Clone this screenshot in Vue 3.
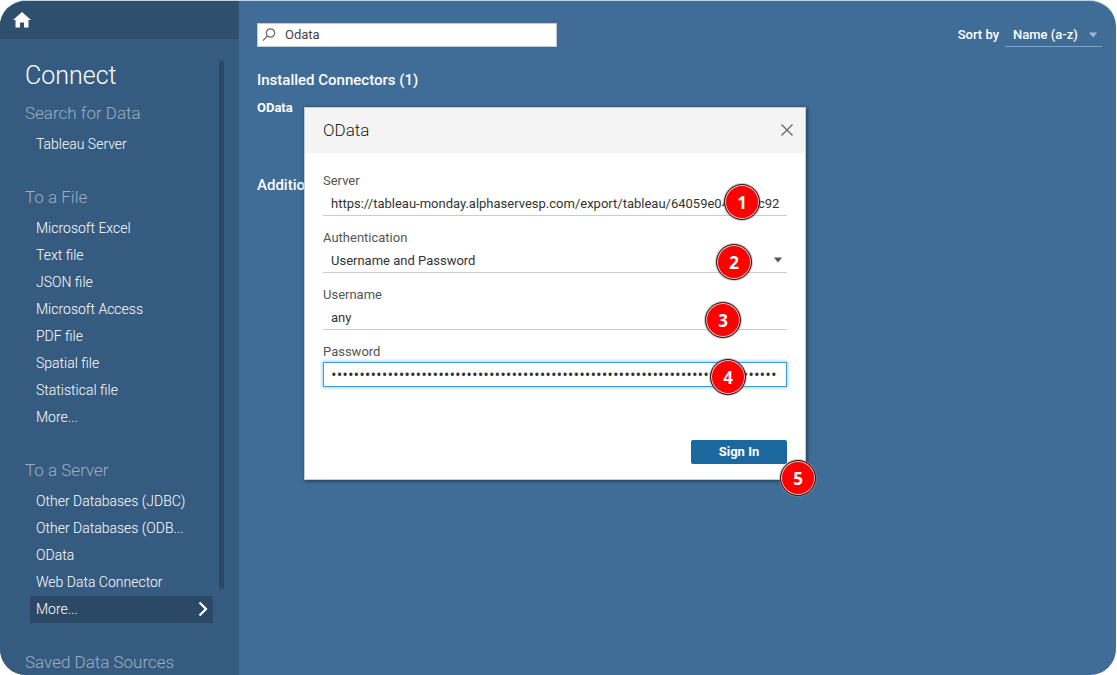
<template>
  <div class="connect-page">
    <!-- Panel lateral -->
    <aside class="sidebar">
      <header class="sidebar-top">
        <a href="#" class="home-link" aria-label="Home">
          <svg width="18" height="16" viewBox="0 0 18 16" fill="#fff">
            <path d="M9 0 L18 8 H15.5 V15.5 H11 V10.5 H7 V15.5 H2.5 V8 H0 Z" />
          </svg>
        </a>
      </header>
      <div class="sidebar-body">
        <nav class="sources">
          <h1>Connect</h1>
          <section v-for="group in groups" :key="group.title" class="source-group">
            <h2>{{ group.title }}</h2>
            <a
              v-for="item in group.items"
              :key="item"
              href="#"
              :class="['source-item', { active: group.title === 'To a Server' && item === 'More...' }]"
            >
              <span>{{ item }}</span>
              <svg
                v-if="group.title === 'To a Server' && item === 'More...'"
                width="10" height="16" viewBox="0 0 10 16" fill="none" stroke="#fff" stroke-width="2.2"
              >
                <path d="M1.5 1.5 L8 8 L1.5 14.5" />
              </svg>
            </a>
          </section>
        </nav>
        <div class="scroll-thumb"></div>
      </div>
    </aside>

    <!-- Conectores -->
    <main class="content">
      <div class="toolbar">
        <div class="search-box">
          <svg width="14" height="14" viewBox="0 0 14 14" fill="none" stroke="#666" stroke-width="1.2">
            <circle cx="8.5" cy="5" r="4.2" />
            <path d="M5.4 8 L1 12.6" />
          </svg>
          <input v-model="search" type="text" aria-label="Search connectors" />
        </div>
        <div class="sort-box">
          <label for="sort">Sort by</label>
          <div class="select-wrap sort-select">
            <select id="sort" v-model="sort">
              <option value="az">Name (a-z)</option>
              <option value="za">Name (z-a)</option>
            </select>
            <svg width="8" height="6" viewBox="0 0 8 6" fill="#a3b9cd"><path d="M0 0.5 H8 L4 5.5 Z" /></svg>
          </div>
        </div>
      </div>
      <h3>Installed Connectors (1)</h3>
      <a href="#" class="connector">OData</a>
      <h3>Additio</h3>
    </main>

    <!-- Dialogo OData -->
    <div class="overlay">
      <form class="dialog" role="dialog" aria-labelledby="dialog-title" @submit.prevent>
        <div class="dialog-head">
          <h2 id="dialog-title">OData</h2>
          <button type="button" class="close-btn" aria-label="Close">
            <svg width="12" height="12" viewBox="0 0 12 12" stroke="#666" stroke-width="1.3">
              <path d="M0.5 0.5 L11.5 11.5 M11.5 0.5 L0.5 11.5" />
            </svg>
          </button>
        </div>
        <div class="dialog-body">
          <div class="field">
            <label for="server">Server</label>
            <input id="server" v-model="server" type="text" />
            <span class="step step-1">1</span>
          </div>
          <div class="field">
            <label for="auth">Authentication</label>
            <div class="select-wrap">
              <select id="auth" v-model="auth">
                <option value="basic">Username and Password</option>
                <option value="none">No Authentication</option>
              </select>
              <svg width="8" height="6" viewBox="0 0 8 6" fill="#555"><path d="M0 0.5 H8 L4 5.5 Z" /></svg>
            </div>
            <span class="step step-2">2</span>
          </div>
          <div class="field">
            <label for="username">Username</label>
            <input id="username" v-model="username" type="text" />
            <span class="step step-3">3</span>
          </div>
          <div class="field">
            <label for="password">Password</label>
            <input id="password" v-model="password" type="password" class="focused" />
            <span class="step step-4">4</span>
          </div>
          <div class="actions">
            <button type="submit" class="sign-in">Sign In</button>
            <span class="step step-5">5</span>
          </div>
        </div>
      </form>
    </div>
  </div>
</template>

<script setup>
import { ref } from 'vue';

const search = ref('Odata');
const sort = ref('az');
const server = ref('https://tableau-monday.alphaservesp.com/export/tableau/64059e04b48ac92');
const auth = ref('basic');
const username = ref('any');
const password = ref('x'.repeat(79));

const groups = [
  { title: 'Search for Data', items: ['Tableau Server'] },
  {
    title: 'To a File',
    items: [
      'Microsoft Excel', 'Text file', 'JSON file', 'Microsoft Access',
      'PDF file', 'Spatial file', 'Statistical file', 'More...'
    ]
  },
  {
    title: 'To a Server',
    items: ['Other Databases (JDBC)', 'Other Databases (ODB...', 'OData', 'Web Data Connector', 'More...']
  },
  { title: 'Saved Data Sources', items: [] }
];
</script>

<style>
body { background: #fff; }
</style>

<style scoped>
* { box-sizing: border-box; }
.connect-page {
  position: relative; display: flex; height: 100vh; overflow: hidden;
  margin-right: 1px; border-top: 1px solid #c3d2dd; border-radius: 26px;
  background: #3f6d97; color: #fff;
  font-family: Roboto, "Liberation Sans", sans-serif; font-size: 13px;
}
h1, h2, h3 { margin: 0; font-weight: 400; }
a { color: inherit; text-decoration: none; }
input, select, button { font: inherit; color: inherit; border: 0; border-radius: 0; margin: 0; outline: none; }
svg { display: block; flex: none; }

.sidebar { width: 239px; flex: none; display: flex; flex-direction: column; background: #365b80; }
.sidebar-top { height: 38px; flex: none; display: flex; align-items: center; padding-left: 13px; background: #2f4f6e; }
.sidebar-body { flex: 1; min-height: 0; display: flex; padding: 21px 15px 0 25px; }
.sources { flex: 1; min-width: 0; }
.sources h1 { font-size: 25px; line-height: 32px; margin-bottom: 4px; font-weight: 300; }
.source-group { margin-bottom: 22px; }
.source-group h2 { font-size: 17px; line-height: 35px; font-weight: 300; color: #9aaec1; }
.source-item {
  display: flex; align-items: center; justify-content: space-between;
  height: 27px; margin: 0 6px 0 5px; padding: 0 5px 2px 6px;
  font-size: 14px; font-weight: 300; color: #fff; white-space: nowrap;
}
.source-item.active { background: #2b4964; }
.scroll-thumb { width: 5px; height: 86%; border-radius: 3px; background: #2b4863; }

.content { flex: 1; min-width: 0; padding: 22px 14px 0 18px; }
.toolbar { display: flex; justify-content: space-between; align-items: center; height: 24px; margin-bottom: 20px; }
.search-box {
  width: 300px; height: 24px; display: flex; align-items: center; gap: 9px;
  padding: 0 4px; background: #fff; border: 1px solid #c3c9cf;
}
.search-box input { flex: 1; min-width: 0; padding: 0 0 2px; background: none; color: #444; }
.sort-box { display: flex; align-items: center; gap: 6px; font-weight: 500; }
.sort-box label { padding-bottom: 1px; }
.select-wrap { display: flex; align-items: center; padding-right: 5px; border-bottom: 1px solid #ccc; }
.select-wrap select { flex: 1; appearance: none; background: none; padding: 0 0 0 8px; }
.sort-select { width: 97px; height: 24px; border-bottom-color: #86a2bc; }
.content h3 { font-size: 15px; line-height: 26px; font-weight: 500; }
.connector { display: block; line-height: 30px; margin-bottom: 49px; font-weight: 700; }

.overlay {
  position: absolute; inset: 0; display: flex; justify-content: center; align-items: flex-start;
  padding: 106px 6px 0 0;
}
.dialog { width: 502px; background: #fff; color: #555; border: 1px solid #c4ccd3; box-shadow: 1px 1px 4px rgba(0, 0, 0, 0.5); }
.dialog-head { display: flex; align-items: center; justify-content: space-between; height: 45px; padding: 0 12px 0 18px; background: #f4f4f4; }
.dialog-head h2 { padding-bottom: 2px; font-size: 17px; font-weight: 300; color: #222; }
.close-btn { padding: 0 0 2px; background: none; }
.dialog-body { padding: 18px 18px 15px; }
.field { position: relative; height: 57px; }
.field label { display: block; line-height: 20px; }
.field input, .field .select-wrap {
  display: flex; width: 100%; height: 25px; background: none;
  border-bottom: 1px solid #ccc; color: #333;
}
.field input { padding: 0 8px; }
.field input.focused {
  font: 15px/20px "Open Sans", sans-serif; padding: 0 7px 2px;
  border: 1px solid #3b9bdc; box-shadow: 0 0 3px 1px rgba(80, 170, 235, 0.5);
}
.actions { position: relative; display: flex; justify-content: flex-end; margin-top: 41px; }
.sign-in { width: 96px; height: 24px; padding: 0 0 2px; border-radius: 2px; background: #1b689f; color: #fff; font-weight: 700; }

.step {
  position: absolute; width: 36px; height: 36px; border-radius: 50%;
  border: 1px solid #222; background: #f00; color: #fff;
  box-shadow: inset 0 0 0 1px #f5c4c4, 0 0 0 1px rgba(150, 150, 150, 0.5);
  font: 700 17px/36px "Open Sans", sans-serif; text-align: center;
}
.step-1 { right: 27px; top: 13px; }
.step-2 { right: 35px; top: 16px; }
.step-3 { right: 46px; top: 17px; }
.step-4 { right: 41px; top: 17px; }
.step-5 { right: -29px; top: 20px; }
</style>
